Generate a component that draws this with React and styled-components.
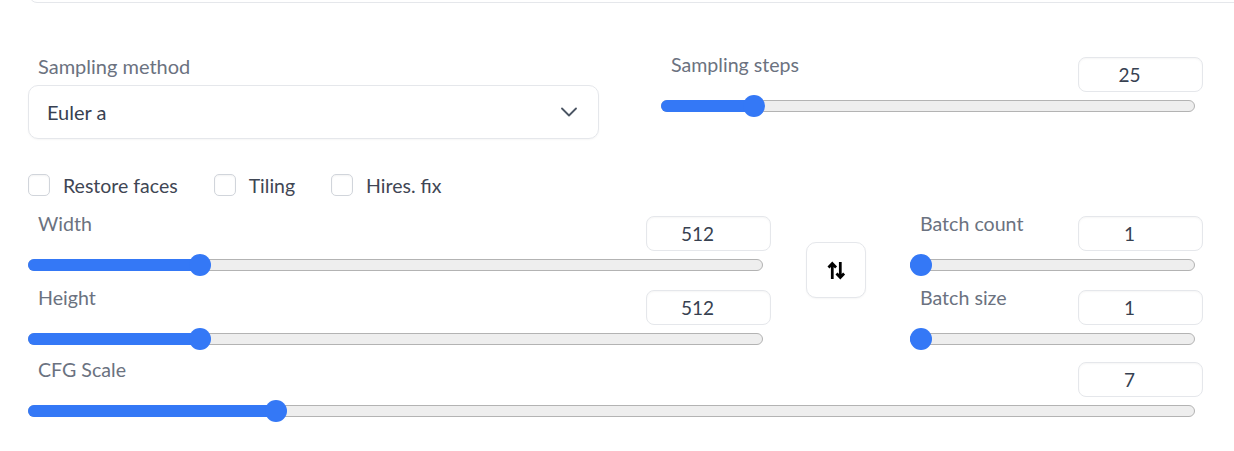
import React from "react";
import styled, { createGlobalStyle } from "styled-components";

const GlobalStyle = createGlobalStyle`
  html, body { margin: 0; padding: 0; background: #ffffff; overflow: hidden; }
  body { font-family: Lato, "Source Sans Pro", "Noto Sans", sans-serif; width: 1234px; height: 451px; }
  * { box-sizing: border-box; }
`;

const BLUE = "#3478f6";

const Page = styled.div`
  display: flex;
  flex-direction: column;
  width: 1234px;
  padding: 0 31px 0 28px;
`;

const PromptEdge = styled.div`
  height: 40px;
  margin: -37px -80px 0 1px;
  border: 1px solid #e5e7eb;
  border-radius: 8px;
`;

const TopRow = styled.div`
  display: flex;
  gap: 62px;
  margin-top: 54px;
`;

const LeftCol = styled.div`
  width: 571px;
  display: flex;
  flex-direction: column;
`;

const RightCol = styled.div`
  flex: 1;
`;

const FieldLabel = styled.div`
  font-size: 20px;
  line-height: 18px;
  color: #6b7280;
  padding-left: 10px;
`;

const Dropdown = styled.div`
  margin-top: 10px;
  height: 54px;
  border: 1px solid #e5e7eb;
  border-radius: 10px;
  display: flex;
  align-items: center;
  justify-content: space-between;
  padding: 0 21px 0 18px;
  box-shadow: 0 1px 2px rgba(0, 0, 0, 0.04);
`;

const DropValue = styled.span`
  font-size: 20px;
  color: #374151;
`;

const SliderWrap = styled.div`
  display: flex;
  flex-direction: column;
  margin-top: ${(p) => p.$mt || 0}px;
`;

const SliderHead = styled.div`
  display: flex;
  justify-content: space-between;
  align-items: flex-start;
  height: 35px;
`;

const SliderLabel = styled.span`
  padding-left: 10px;
  margin-top: -2px;
  font-size: 19.6px;
  line-height: 20px;
  color: #6b7280;
`;

const NumberBox = styled.div`
  width: 125px;
  height: 35px;
  border: 1px solid #e5e7eb;
  border-radius: 8px;
  display: flex;
  align-items: center;
  justify-content: center;
  padding-right: 22px;
  font-size: 19px;
  color: #374151;
  box-shadow: inset 0 1px 2px rgba(0, 0, 0, 0.04);
`;

const TrackArea = styled.div`
  position: relative;
  height: 22px;
  margin-top: 3px;
  margin-right: 8px;
  display: flex;
  align-items: center;
`;

const Track = styled.div`
  position: relative;
  width: 100%;
  height: 12px;
  border: 1px solid #b3b3b3;
  background: #eeeeee;
  border-radius: 6px;
`;

const Fill = styled.div`
  position: absolute;
  left: -1px;
  top: -1px;
  bottom: -1px;
  background: ${BLUE};
  border-radius: 6px;
`;

const Thumb = styled.div`
  position: absolute;
  top: 0;
  width: 22px;
  height: 22px;
  border-radius: 50%;
  background: ${BLUE};
`;

const CheckRow = styled.div`
  display: flex;
  align-items: center;
  height: 22px;
  margin-top: 35px;
`;

const CheckItem = styled.label`
  display: flex;
  align-items: center;
  gap: 13px;
  margin-right: 36px;
`;

const CheckBox = styled.span`
  width: 22px;
  height: 22px;
  border: 1px solid #d1d5db;
  border-radius: 5px;
  background: #fff;
  box-shadow: inset 0 1px 2px rgba(0, 0, 0, 0.05);
`;

const CheckText = styled.span`
  font-size: 19.5px;
  color: #3f4654;
`;

const SizeRow = styled.div`
  display: flex;
  align-items: flex-start;
  margin-top: 20px;
`;

const SizeCol = styled.div`
  width: 743px;
  display: flex;
  flex-direction: column;
  gap: 14px;
`;

const SwapButton = styled.button`
  width: 60px;
  height: 56px;
  margin: 26px 44px 0 35px;
  border: 1px solid #e5e7eb;
  border-radius: 10px;
  background: #fff;
  display: flex;
  align-items: center;
  justify-content: center;
  padding: 0;
  box-shadow: 0 1px 2px rgba(0, 0, 0, 0.04);
`;

const BatchCol = styled.div`
  flex: 1;
  display: flex;
  flex-direction: column;
  gap: 14px;
`;

function Slider({ label, value, min, max, mt }) {
  const frac = (value - min) / (max - min);
  return (
    <SliderWrap $mt={mt}>
      <SliderHead>
        <SliderLabel>{label}</SliderLabel>
        <NumberBox>{value}</NumberBox>
      </SliderHead>
      <TrackArea>
        <Track>
          <Fill style={{ width: `calc(12px + ${frac} * (100% - 22px))` }} />
        </Track>
        <Thumb style={{ left: `calc(${frac} * (100% - 22px))` }} />
      </TrackArea>
    </SliderWrap>
  );
}

function Check({ label }) {
  return (
    <CheckItem>
      <CheckBox />
      <CheckText>{label}</CheckText>
    </CheckItem>
  );
}

export default function App() {
  return (
    <>
      <GlobalStyle />
      <Page>
        <PromptEdge />
        <TopRow>
          <LeftCol>
            <FieldLabel>Sampling method</FieldLabel>
            <Dropdown>
              <DropValue>Euler a</DropValue>
              <svg width="16" height="10" viewBox="0 0 16 10" fill="none">
                <path d="M1 1.5l7 7 7-7" stroke="#4b5563" strokeWidth="1.8" strokeLinecap="round" strokeLinejoin="round" />
              </svg>
            </Dropdown>
          </LeftCol>
          <RightCol>
            <Slider label="Sampling steps" value={25} min={1} max={150} />
          </RightCol>
        </TopRow>
        <CheckRow>
          <Check label="Restore faces" />
          <Check label="Tiling" />
          <Check label="Hires. fix" />
        </CheckRow>
        <SizeRow>
          <SizeCol>
            <Slider label="Width" value={512} min={64} max={2048} />
            <Slider label="Height" value={512} min={64} max={2048} />
          </SizeCol>
          <SwapButton title="Switch width/height">
            <svg width="19" height="19" viewBox="0 0 18 18" fill="none">
              <path d="M5 17V2.5M1.4 6.2L5 2.4 8.6 6.2" stroke="#000" strokeWidth="2.6" strokeLinejoin="miter" />
              <path d="M12.6 1v14.5M9 11.8l3.6 3.8 3.6-3.8" stroke="#000" strokeWidth="2.6" strokeLinejoin="miter" />
            </svg>
          </SwapButton>
          <BatchCol>
            <Slider label="Batch count" value={1} min={1} max={100} />
            <Slider label="Batch size" value={1} min={1} max={8} />
          </BatchCol>
        </SizeRow>
        <Slider label="CFG Scale" value={7} min={1} max={30} mt={12} />
      </Page>
    </>
  );
}
